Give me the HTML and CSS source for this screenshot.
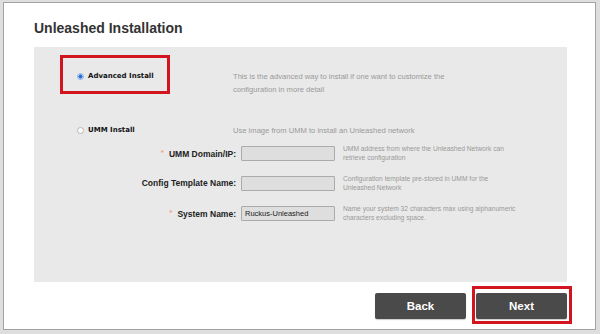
FILE: index.html
```html
<!DOCTYPE html>
<html lang="en">
<head>
  <meta charset="UTF-8" />
  <meta name="viewport" content="width=device-width, initial-scale=1" />
  <title>Unleashed Installation</title>
  <link rel="stylesheet" href="styles.css">
</head>
<body>
  <div class="frame">
    <h1>Unleashed Installation</h1>

    <div class="panel">
      <div class="option">
        <label class="choice marked">
          <input type="radio" name="mode" checked />
          Advanced Install
        </label>
        <p class="hint">This is the advanced way to install if one want to customize the<br>configuration in more detail</p>
      </div>

      <div class="option second">
        <label class="choice">
          <input type="radio" name="mode" />
          UMM Install
        </label>
        <p class="hint">Use image from UMM to install an Unleashed network</p>
      </div>

      <div class="form">
        <label class="field-label"><span class="req">*</span>UMM Domain/IP:</label>
        <input class="field" type="text" value="" />
        <p class="field-hint">UMM address from where the Unleashed Network can<br>retrieve configuration</p>

        <label class="field-label">Config Template Name:</label>
        <input class="field" type="text" value="" />
        <p class="field-hint">Configuration template pre-stored in UMM for the<br>Unleashed Network</p>

        <label class="field-label"><span class="req">*</span>System Name:</label>
        <input class="field" type="text" value="Ruckus-Unleashed" />
        <p class="field-hint">Name your system 32 characters max using alphanumeric<br>characters excluding space.</p>
      </div>
    </div>

    <div class="actions">
      <button class="btn">Back</button>
      <button class="btn marked">Next</button>
    </div>
  </div>
</body>
</html>
```

FILE: styles.css
```css
body {
  margin: 0;
  background-color: #dedede;
  font-family: "Liberation Sans", Arial, sans-serif;
  overflow: hidden;
}

.frame {
  margin: 2px 0 0 3px;
  width: 593px;
  height: 328px;
  background: white;
  border: 1px solid #a3a3a3;
  padding: 17px 28px 0 30px;
  box-sizing: border-box;
}

h1 {
  margin: 0;
  font-size: 14px;
  line-height: 16px;
  font-weight: bold;
  color: #333;
}

.panel {
  margin-top: 11px;
  height: 235px;
  background-color: #e9e9e9;
  padding-top: 23px;
  box-sizing: border-box;
}

.option {
  display: flex;
  align-items: flex-start;
}

.option.second {
  margin-top: 28px;
}

.choice {
  position: relative;
  display: flex;
  align-items: center;
  width: 156px;
  padding-left: 43px;
  font-family: "DejaVu Sans", Verdana, sans-serif;
  font-size: 7px;
  font-weight: bold;
  line-height: 13px;
  color: #111;
}

.choice input {
  appearance: none;
  -webkit-appearance: none;
  width: 7px;
  height: 7px;
  margin: 0 4px 0 0;
  border-radius: 50%;
  border: 1px solid #b5b5b5;
  background: white;
  box-sizing: border-box;
}

.choice input:checked {
  border-color: #8fb3e8;
  background: radial-gradient(circle, #2a6fd6 0, #2a6fd6 1.8px, #cfe0f8 2.3px);
}

.choice.marked::after {
  content: "";
  position: absolute;
  left: 26px;
  top: -15px;
  width: 110px;
  height: 39px;
  border: 3px solid #d2141e;
  box-sizing: border-box;
}

.hint {
  margin: 0;
  font-size: 7.6px;
  line-height: 13px;
  color: #999;
}

.form {
  display: grid;
  grid-template-columns: 202px 94px 1fr;
  grid-auto-rows: 30px;
  column-gap: 5px;
  align-items: center;
  margin-top: 1px;
}

.field-label {
  text-align: right;
  font-size: 8.5px;
  font-weight: bold;
  color: #222;
}

.req {
  color: #f3a683;
  font-size: 8px;
  margin-right: 5px;
  vertical-align: 2px;
}

.field {
  height: 15px;
  width: 94px;
  padding: 0 3px;
  border: 1px solid #ababab;
  border-radius: 1px;
  background-color: #dedede;
  font-family: "Liberation Sans", Arial, sans-serif;
  font-size: 7.5px;
  color: #222;
  box-sizing: border-box;
}

.field-hint {
  margin: 0 0 0 3px;
  font-size: 6.7px;
  line-height: 9.5px;
  color: #999;
}

.actions {
  display: flex;
  justify-content: flex-end;
  gap: 10px;
  margin-top: 11px;
}

.btn {
  position: relative;
  width: 91px;
  height: 26px;
  border: none;
  border-radius: 2px;
  background-color: #4a4a4a;
  color: white;
  font-family: "Liberation Sans", Arial, sans-serif;
  font-size: 11.5px;
  font-weight: bold;
  box-shadow: 0 1px 1px rgba(0,0,0,0.2);
}

.btn.marked::after {
  content: "";
  position: absolute;
  top: -7px;
  left: -4px;
  right: -5px;
  bottom: -5px;
  border: 3px solid #d2141e;
}
```
